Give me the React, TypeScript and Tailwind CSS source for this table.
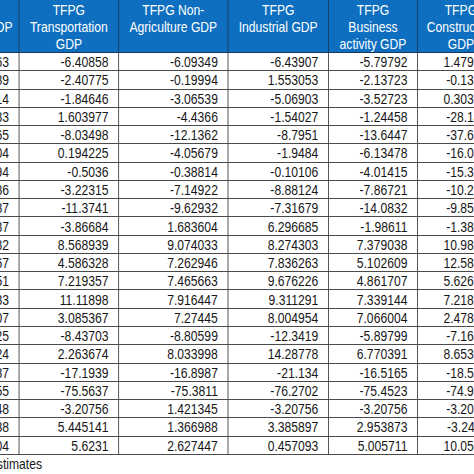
const headers: string[][] = [
  ['TFPG', 'Services GDP'],
  ['TFPG', 'Transportation', 'GDP'],
  ['TFPG Non-', 'Agriculture GDP'],
  ['TFPG', 'Industrial GDP'],
  ['TFPG', 'Business', 'activity GDP'],
  ['TFPG', 'Construction', 'GDP'],
];

const widths = ['w-[110px]', 'w-[123px]', 'w-[135px]', 'w-[124px]', 'w-[110px]', 'w-[107px]'];

const rows: string[][] = [
  ['-6.02763', '-6.40858', '-6.09349', '-6.43907', '-5.79792', '1.479236'],
  ['-0.80489', '-2.40775', '-0.19994', '1.553053', '-2.13723', '-0.13832'],
  ['-2.96814', '-1.84646', '-3.06539', '-5.06903', '-3.52723', '0.303172'],
  ['-2.63383', '1.603977', '-4.4366', '-1.54027', '-1.24458', '-28.1436'],
  ['-9.71865', '-8.03498', '-12.1362', '-8.7951', '-13.6447', '-37.6284'],
  ['-3.24604', '0.194225', '-4.05679', '-1.9484', '-6.13478', '-16.0472'],
  ['-1.56394', '-0.5036', '-0.38814', '-0.10106', '-4.01415', '-15.3398'],
  ['-5.81386', '-3.22315', '-7.14922', '-8.88124', '-7.86721', '-10.2561'],
  ['-9.95087', '-11.3741', '-9.62932', '-7.31679', '-14.0832', '-9.85317'],
  ['-0.89987', '-3.86684', '1.683604', '6.296685', '-1.98611', '-1.38242'],
  ['7.849582', '8.568939', '9.074033', '8.274303', '7.379038', '10.98126'],
  ['6.734767', '4.586328', '7.262946', '7.836263', '5.102609', '12.58473'],
  ['7.685351', '7.219357', '7.465663', '9.676226', '4.861707', '5.626281'],
  ['8.624383', '11.11898', '7.916447', '9.311291', '7.339144', '7.218334'],
  ['6.213707', '3.085367', '7.27445', '8.004954', '7.066004', '2.478215'],
  ['-7.63125', '-8.43703', '-8.80599', '-12.3419', '-5.89799', '-7.16482'],
  ['6.471224', '2.263674', '8.033998', '14.28778', '6.770391', '8.653137'],
  ['-15.9487', '-17.1939', '-16.8987', '-21.134', '-16.5165', '-18.5227'],
  ['-74.8655', '-75.5637', '-75.3811', '-76.2702', '-75.4523', '-74.9418'],
  ['-1.72348', '-3.20756', '1.421345', '-3.20756', '-3.20756', '-3.20756'],
  ['2.804288', '5.445141', '1.366988', '3.385897', '2.953873', '-3.24119'],
  ['2.938404', '5.6231', '2.627447', '0.457093', '5.005711', '10.05382'],
];

export default function App() {
  return (
    <div className="w-[474px] h-[474px] overflow-hidden bg-white font-['Liberation_Sans',Arial,sans-serif] text-[15px] text-[#161616]">
      <div className="w-max origin-top-left scale-x-[0.81]">
        <div className="ml-[-86px]">
          {/* header */}
          <div className="flex h-[53px] bg-[#0e6fc0] text-white border-b border-[#1d3557]">
            {headers.map((lines, i) => (
              <div
                key={i}
                className={`${widths[i]} shrink-0 border-r border-[#1d3557] pt-px text-center leading-[17px] whitespace-nowrap`}
              >
                {lines.map((l, j) => (
                  <div key={j}>{l}</div>
                ))}
              </div>
            ))}
          </div>

          {/* body */}
          {rows.map((row, r) => (
            <div key={r} className="flex h-[18.27px] border-b border-[#4a4a4a]">
              {row.map((v, c) => (
                <div
                  key={c}
                  className={`${widths[c]} shrink-0 flex items-center justify-end border-r border-[#2e2e2e] pr-3 leading-none`}
                >
                  {v}
                </div>
              ))}
            </div>
          ))}
        </div>

        <p className="ml-[-126px] leading-[17px]">Source: Authors' estimates</p>
      </div>
    </div>
  );
}
